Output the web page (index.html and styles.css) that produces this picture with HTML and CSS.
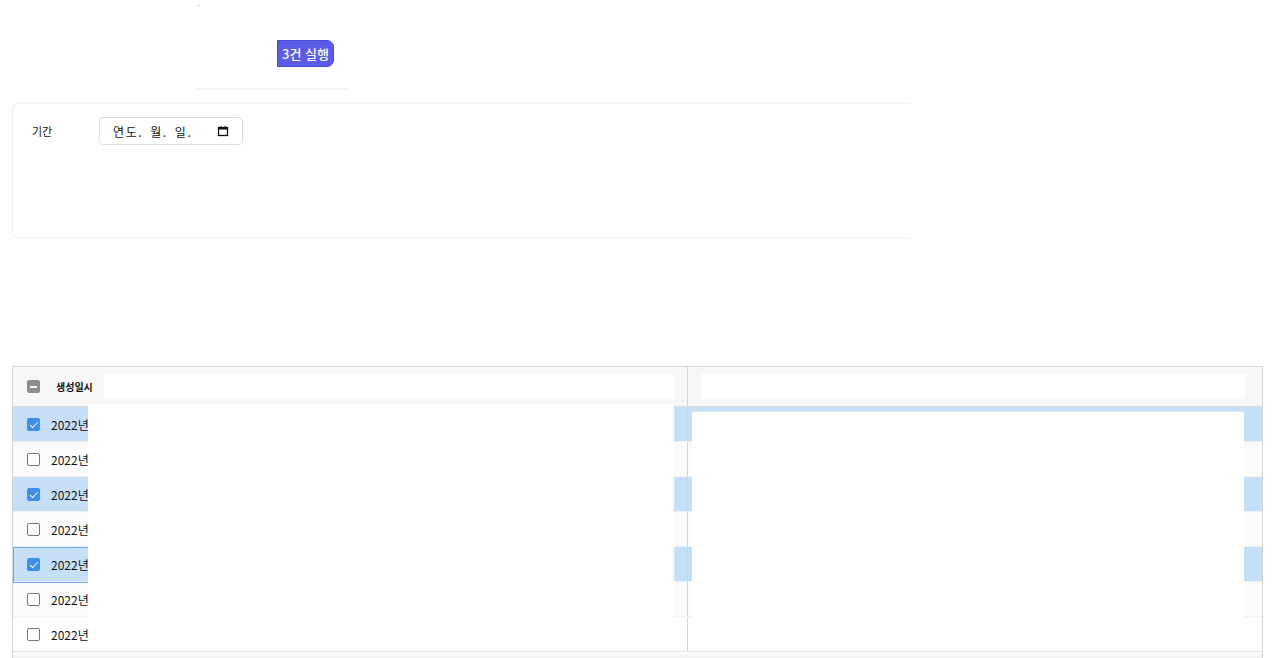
FILE: index.html
```html
<!doctype html>
<html lang="ko">
  <head>
    <meta charset="UTF-8" />
    <title>실행</title>
    <link rel="stylesheet" href="styles.css">
  </head>
  <body>
    <div class="toolbar">
      <span class="tick"></span>
      <button class="run-btn">3건 실행</button>
    </div>

    <section class="filter-card">
      <label class="filter-label" for="period">기간</label>
      <div class="date-input" id="period">
        <span>연도. 월. 일.</span>
        <svg width="12" height="12" viewBox="0 0 12 12">
          <rect x="1.5" y="2.5" width="9" height="8" fill="none" stroke="#111" stroke-width="1.3"/>
          <rect x="1.5" y="2.5" width="9" height="2" fill="#111"/>
          <rect x="3.5" y="1" width="1" height="2" fill="#111"/>
          <rect x="7.5" y="1" width="1" height="2" fill="#111"/>
        </svg>
      </div>
    </section>

    <section class="grid">
      <div class="grid-head">
        <div class="col col-left">
          <span class="cb cb-mixed"></span>
          <span class="head-title">생성일시</span>
          <span class="head-filler"></span>
        </div>
        <div class="col col-right">
          <span class="head-filler"></span>
        </div>
      </div>
      <div class="grid-body">
        <div class="row is-selected"><div class="col col-left"><span class="cb cb-on"></span>2022년</div><div class="col col-right"></div></div>
        <div class="row"><div class="col col-left"><span class="cb"></span>2022년</div><div class="col col-right"></div></div>
        <div class="row is-selected"><div class="col col-left"><span class="cb cb-on"></span>2022년</div><div class="col col-right"></div></div>
        <div class="row"><div class="col col-left"><span class="cb"></span>2022년</div><div class="col col-right"></div></div>
        <div class="row is-selected"><div class="col col-left is-focused"><span class="cb cb-on"></span>2022년</div><div class="col col-right"></div></div>
        <div class="row"><div class="col col-left"><span class="cb"></span>2022년</div><div class="col col-right"></div></div>
        <div class="row is-last"><div class="col col-left"><span class="cb"></span>2022년</div><div class="col col-right"></div></div>
        <div class="mask mask-left"></div>
        <div class="mask mask-right"></div>
      </div>
      <div class="grid-foot"></div>
    </section>
  </body>
</html>
```

FILE: styles.css
```css
* {
  box-sizing: border-box;
}

body {
  margin: 0;
  background: #fff;
  color: #111;
  font-family: "Noto Sans CJK KR", "Noto Sans", sans-serif;
  height: 658px;
  overflow: hidden;
}

.toolbar {
  position: relative;
  margin-left: 196px;
  width: 151px;
  height: 90px;
  border-bottom: 2px solid #f3f3f3;
  padding: 40px 0 0 81px;
}
.tick {
  position: absolute;
  left: 0;
  top: 5px;
  width: 4px;
  height: 1px;
  background: #ddd;
}
.run-btn {
  height: 27px;
  padding: 0 4px;
  border: 1px solid #4a4ad0;
  border-radius: 0 7px 7px 0;
  background: #5b5be8;
  color: #fff;
  font-family: inherit;
  font-size: 13px;
  font-weight: 500;
  line-height: 25px;
}

.filter-card {
  margin: 13px 0 0 12px;
  width: 898px;
  height: 136px;
  border: 1px solid #eee;
  border-right: none;
  border-radius: 6px 0 0 6px;
  padding: 13px 0 0 19px;
  display: flex;
  align-items: flex-start;
}
.filter-label {
  font-size: 11px;
  width: 67px;
  line-height: 28px;
}
.date-input {
  width: 144px;
  height: 28px;
  border: 1px solid #ddd;
  border-radius: 4px;
  display: flex;
  align-items: center;
  justify-content: space-between;
  padding: 0 13px 0 13px;
  font-size: 12px;
  letter-spacing: 1.6px;
  word-spacing: 2px;
}

.grid {
  margin: 127px 0 0 12px;
  width: 1251px;
  border: 1px solid #d4d4d4;
  border-bottom: none;
}
.grid-head {
  display: flex;
  height: 40px;
  background: #f7f7f7;
  border-bottom: 1px solid #dcdcdc;
}
.col {
  display: flex;
  align-items: center;
  position: relative;
}
.col-left {
  width: 675px;
  padding-left: 14px;
  border-right: 1px solid #d4d4d4;
}
.col-right {
  flex: 1;
  padding-left: 13px;
}
.grid-head .col-left {
  padding-right: 13px;
}
.grid-head .col-right {
  padding-right: 16px;
}
.head-title {
  font-size: 10px;
  font-weight: 700;
  margin: 0 11px 0 16px;
}
.head-filler {
  flex: 1;
  height: 25px;
  background: #fff;
}

.cb {
  width: 13px;
  height: 13px;
  border: 1px solid #767676;
  border-radius: 2px;
  background: #fff;
  position: relative;
  flex: none;
}
.grid-body .cb {
  margin-right: 11px;
}
.cb-mixed {
  background: #8d8d8d;
  border-color: #8d8d8d;
}
.cb-mixed::after {
  content: "";
  position: absolute;
  left: 2px;
  top: 5px;
  width: 7px;
  height: 1.5px;
  background: #fff;
}
.cb-on {
  background: #3f8ee8;
  border-color: #3f8ee8;
}
.cb-on::after {
  content: "";
  position: absolute;
  left: 3.5px;
  top: 1px;
  width: 3px;
  height: 7px;
  border: solid #fff;
  border-width: 0 1.5px 1.5px 0;
  transform: rotate(45deg);
}

.grid-body {
  position: relative;
}
.row {
  display: flex;
  height: 35px;
  font-size: 12px;
  background: #fbfbfb;
  border-bottom: 1px solid #eef0f4;
}
.row.is-selected {
  background: #c6dff8;
}
.row.is-last {
  background: #fff;
  border-bottom-color: #e4e4e4;
}
.col.is-focused::before {
  content: "";
  position: absolute;
  left: 0;
  top: 0;
  width: 120px;
  height: 100%;
  border: 1px solid #6fa6e6;
  pointer-events: none;
}

.mask {
  position: absolute;
  background: #fff;
}
.mask-left {
  left: 75px;
  top: -3px;
  width: 586px;
  height: 242px;
}
.mask-right {
  left: 679px;
  top: 4px;
  width: 552px;
  height: 206px;
  border-top: 1px solid #d9e8f8;
}

.grid-foot {
  height: 14px;
  background: linear-gradient(#fff, #f1f1f1 45%, #e3e3e3 50%, #f3f3f3 55%);
}
```
